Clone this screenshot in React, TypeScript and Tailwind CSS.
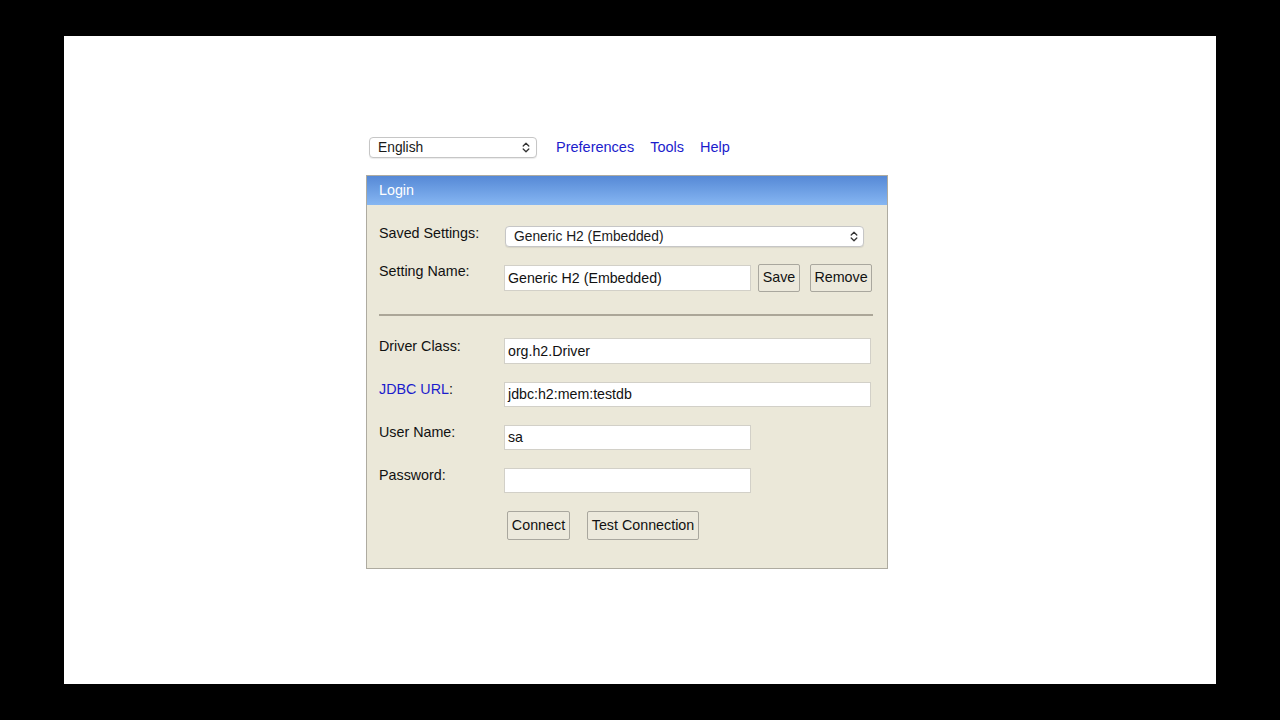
import React from "react";

const font = { fontFamily: '"Liberation Sans", Arial, Helvetica, sans-serif' };

function Chevrons() {
  return (
    <svg width="8" height="11" viewBox="0 0 8 11" className="shrink-0">
      <path d="M1.2 4 L4 1.3 L6.8 4" fill="none" stroke="#333" strokeWidth="1.3" strokeLinecap="round" strokeLinejoin="round" />
      <path d="M1.2 7 L4 9.7 L6.8 7" fill="none" stroke="#333" strokeWidth="1.3" strokeLinecap="round" strokeLinejoin="round" />
    </svg>
  );
}

function FakeSelect({ text, className }: { text: string; className: string }) {
  return (
    <div
      className={`flex items-center justify-between bg-white border border-[#c6c6c6] rounded-[4px] shadow-[0_1px_1px_rgba(0,0,0,0.08)] text-[13.8px] text-[#1a1a1a] ${className}`}
    >
      <span className="leading-none">{text}</span>
      <Chevrons />
    </div>
  );
}

function Input({ value, w, h }: { value: string; w: string; h: string }) {
  return (
    <div
      className={`${w} ${h} bg-white border border-[#d2d0c8] flex items-center pl-[3px] pt-[1px] text-[14.2px] text-[#111] shrink-0`}
    >
      {value}
    </div>
  );
}

function Btn({ label, w }: { label: string; w: string }) {
  return (
    <div
      className={`${w} h-[28px] flex items-center justify-center border border-[#a9a79e] rounded-[2px] bg-[#ece9dc] text-[14.3px] text-[#111] shrink-0`}
    >
      {label}
    </div>
  );
}

function Label({ children }: { children: React.ReactNode }) {
  return <div className="w-[125px] shrink-0 leading-4 pt-[1px] text-[14.3px] text-[#111]">{children}</div>;
}

export default function App() {
  return (
    <div className="w-full h-[720px] bg-black flex items-center justify-center" style={font}>
      <div className="w-[1152px] h-[648px] bg-white pt-[101px] pl-[302px]">
        {/* top bar */}
        <div className="flex items-center h-[21px]">
          <FakeSelect text="English" className="ml-[3px] w-[168px] h-[21px] pl-[8px] pr-[6px]" />
          <div className="flex items-center ml-[19px] text-[14.5px] text-[#1c1ccc] gap-[16px]">
            <span>Preferences</span>
            <span>Tools</span>
            <span>Help</span>
          </div>
        </div>

        {/* panel */}
        <div className="mt-[17px] w-[522px] h-[394px] border border-[#aeaba0] bg-[#ebe8d9] box-border">
          <div className="h-[29px] bg-gradient-to-b from-[#5689d6] to-[#86b6f2] flex items-center pl-[12px] pt-[1px] text-white text-[14.3px]">
            Login
          </div>
          <div className="pl-[12px] pt-[19px]">
            <div className="flex items-start">
              <Label>Saved Settings:</Label>
              <FakeSelect text="Generic H2 (Embedded)" className="mt-[2px] ml-[1px] w-[359px] h-[21px] pl-[8px] pr-[5px]" />
            </div>
            <div className="flex items-start mt-[15px]">
              <Label>Setting Name:</Label>
              <div className="mt-[3px]">
                <Input value="Generic H2 (Embedded)" w="w-[247px]" h="h-[26px]" />
              </div>
              <div className="mt-[2px] ml-[7px] flex gap-[10px]">
                <Btn label="Save" w="w-[42px]" />
                <Btn label="Remove" w="w-[62px]" />
              </div>
            </div>
            <div className="mt-[22px] w-[494px] h-[2px] bg-[#aba698]" />
            <div className="flex items-start mt-[21px]">
              <Label>Driver Class:</Label>
              <div className="mt-[1px]">
                <Input value="org.h2.Driver" w="w-[367px]" h="h-[26px]" />
              </div>
            </div>
            <div className="flex items-start mt-[16px]">
              <Label>
                <span className="text-[#1c1ccc]">JDBC URL</span>:
              </Label>
              <div className="mt-[2px]">
                <Input value="jdbc:h2:mem:testdb" w="w-[367px]" h="h-[25px]" />
              </div>
            </div>
            <div className="flex items-start mt-[16px]">
              <Label>User Name:</Label>
              <div className="mt-[2px]">
                <Input value="sa" w="w-[247px]" h="h-[25px]" />
              </div>
            </div>
            <div className="flex items-start mt-[16px]">
              <Label>Password:</Label>
              <div className="mt-[2px]">
                <Input value="" w="w-[247px]" h="h-[25px]" />
              </div>
            </div>
            <div className="flex mt-[18px] ml-[128px] gap-[17px]">
              <Btn label="Connect" w="w-[63px] !h-[29px]" />
              <Btn label="Test Connection" w="w-[112px] !h-[29px]" />
            </div>
          </div>
        </div>
      </div>
    </div>
  );
}
